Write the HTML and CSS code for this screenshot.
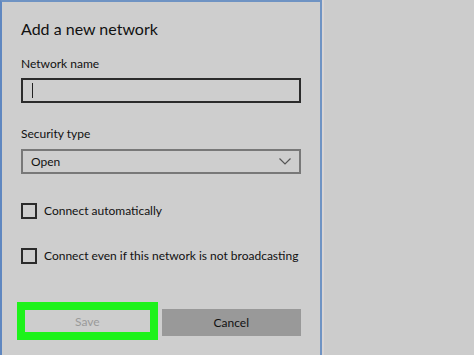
FILE: index.html
```html
<!DOCTYPE html>
<html lang="en">
  <head>
    <meta charset="UTF-8" />
    <title>Add a new network</title>
    <link rel="stylesheet" href="styles.css">
  </head>
  <body>
    <div class="screen">
      <div class="dialog">
        <h1>Add a new network</h1>

        <div class="field">
          <label class="field-label">Network name</label>
          <div class="text-input"><span class="caret"></span></div>
        </div>

        <div class="field">
          <label class="field-label">Security type</label>
          <div class="select">
            <span>Open</span>
            <svg class="chevron" width="12" height="7" viewBox="0 0 12 7">
              <path d="M0.5 0.5 L6 6 L11.5 0.5" fill="none" stroke="#555" stroke-width="1.2" />
            </svg>
          </div>
        </div>

        <div class="check first">
          <span class="box"></span>
          <span>Connect automatically</span>
        </div>
        <div class="check">
          <span class="box"></span>
          <span>Connect even if this network is not broadcasting</span>
        </div>

        <div class="actions">
          <div class="highlight">
            <button class="btn btn-save">Save</button>
          </div>
          <button class="btn btn-cancel">Cancel</button>
        </div>
      </div>
      <div class="backdrop"></div>
    </div>
  </body>
</html>
```

FILE: styles.css
```css
* {
  box-sizing: border-box;
  margin: 0;
  padding: 0;
}

body {
  background: #cdcdcd;
  font-family: Lato, "Noto Sans", sans-serif;
  color: #111;
}

.screen {
  display: flex;
  height: 355px;
}

.dialog {
  width: 322px;
  height: 100%;
  background: #cecece;
  border-top: 2px solid #6f93c3;
  border-left: 2px solid #5f87c0;
  border-right: 2px solid #6f93c3;
  padding: 15px 19px 0 19px;
}

.backdrop {
  flex: 1;
  background: #cccccc;
  border-left: 2px solid #d8d4d4;
}

h1 {
  font-size: 16px;
  font-weight: 400;
  line-height: 24px;
  margin-bottom: 15px;
}

.field-label {
  display: block;
  font-size: 12px;
  line-height: 16px;
  margin-bottom: 6px;
}

.field + .field {
  margin-top: 23px;
}

.field + .field .field-label {
  margin-bottom: 7px;
}

.text-input {
  height: 25px;
  width: 280px;
  border: 2px solid #2b2b2b;
  padding: 3px 9px;
}

.caret {
  display: block;
  width: 1px;
  height: 15px;
  background: #222;
}

.select {
  height: 25px;
  width: 280px;
  border: 2px solid #787878;
  display: flex;
  align-items: center;
  justify-content: space-between;
  padding: 0 8px 0 8px;
  font-size: 12px;
}

.check {
  display: flex;
  align-items: center;
  gap: 7px;
  font-size: 12px;
  line-height: 18px;
  white-space: nowrap;
  margin-top: 27px;
}

.check.first {
  margin-top: 28px;
}

.box {
  width: 16px;
  height: 16px;
  border: 2px solid #2b2b2b;
  flex: none;
}

.actions {
  display: flex;
  align-items: flex-start;
  gap: 4px;
  margin-top: 37px;
  margin-left: -4px;
}

.highlight {
  border: 8px solid #1df21a;
  width: 141px;
  height: 38px;
}

.btn {
  border: none;
  font-family: inherit;
  font-size: 12px;
}

.btn-save {
  display: block;
  width: 100%;
  height: 100%;
  background: #cdcdcd;
  color: #9a9a9a;
}

.btn-cancel {
  width: 140px;
  height: 27px;
  background: #999999;
  color: #111;
  margin-top: 7px;
}
```
